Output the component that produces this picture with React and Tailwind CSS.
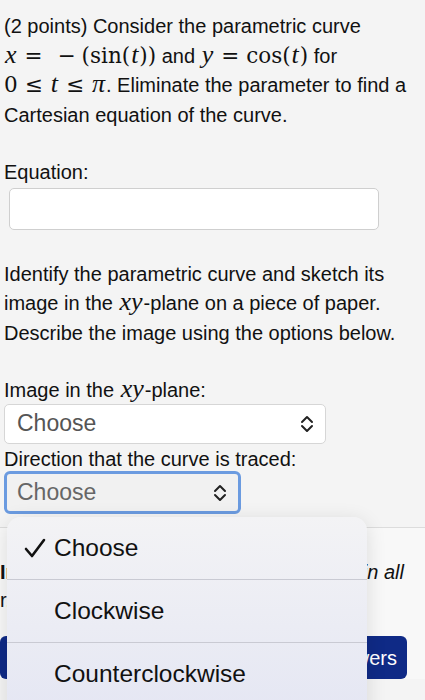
import React from 'react';

const sans = { fontFamily: '"Liberation Sans", Arial, sans-serif' };

function M({ children, rel, bin }) {
  const space = rel ? 'mx-[7px]' : bin ? 'ml-[8px] mr-[6px]' : '';
  return (
    <span className={`inline-block font-['DejaVu_Serif',serif] text-[21.5px] leading-none ${space}`}>
      {children}
    </span>
  );
}

function V({ children }) {
  return (
    <span className="mx-[1px] inline-block font-['Liberation_Serif',serif] text-[26px] italic leading-none">
      {children}
    </span>
  );
}

function Chevrons() {
  return (
    <svg width="14" height="18" viewBox="0 0 14 18" fill="none" stroke="#222" strokeWidth="2" strokeLinecap="round" strokeLinejoin="round">
      <path d="M2 7 L7 2 L12 7" />
      <path d="M2 11 L7 16 L12 11" />
    </svg>
  );
}

function Check() {
  return (
    <svg width="22" height="20" viewBox="0 0 22 20" fill="none" stroke="#111" strokeWidth="2.6" strokeLinecap="round" strokeLinejoin="round">
      <path d="M2 11 L8 18 L20 2" />
    </svg>
  );
}

export default function App() {
  return (
    <div className="relative h-[700px] w-[425px] overflow-hidden bg-[#f4f4f4] text-[#111]" style={sans}>
      <div className="px-1 pt-[12px] text-[20px] leading-[29.5px]">
        <p>
          (2 points) Consider the parametric curve
          <br />
          <V>x</V><M rel>=</M><M bin>−</M><M>(sin(</M><V>t</V><M>))</M> and <V>y</V><M rel>=</M><M>cos(</M><V>t</V><M>)</M> for
          <br />
          <M>0</M><M rel>≤</M><V>t</V><M rel>≤</M><V>π</V>. Eliminate the parameter to find a
          <br />
          Cartesian equation of the curve.
        </p>

        <p className="mt-[28px]">Equation:</p>
        <div className="ml-[5px] h-[42px] w-[370px] rounded-[5px] border border-[#cfcfcf] bg-white" />

        <p className="mt-[30px]">
          Identify the parametric curve and sketch its
          <br />
          image in the <V>xy</V>-plane on a piece of paper.
          <br />
          Describe the image using the options below.
        </p>

        <p className="mt-[28px]">
          Image in the <V>xy</V>-plane:
        </p>
        <div className="mt-[-2px] flex h-[40px] w-[322px] items-center justify-between rounded-[5px] border border-[#d6d6d6] bg-white pl-[12px] pr-[11px]">
          <span className="text-[23px] text-[#555]">Choose</span>
          <Chevrons />
        </div>

        <p className="mt-[1px]">Direction that the curve is traced:</p>
        <div className="mt-[-3px] flex h-[43px] w-[237px] items-center justify-between rounded-[6px] border-[3px] border-[#6b9be0] bg-[#f1f1f1] pl-[10px] pr-[11px]">
          <span className="text-[23px] text-[#666]">Choose</span>
          <Chevrons />
        </div>
      </div>

      <div className="mt-[13px] border-t border-[#dcdcdc] bg-[#f8f8f8] pt-[30px] text-[20px] leading-[28px]">
        <div className="flex justify-between pr-[21px]">
          <b>In</b>
          <i>credit on this problem in all</i>
        </div>
        <p>r.</p>
        <div className="mt-[22px] flex h-[43px] w-[407px] items-center justify-end rounded-[6px] bg-[#0f2a86] pr-[10px] text-white">
          Submit Answers
        </div>
      </div>

      <div className="absolute left-[7px] top-[517px] h-[220px] w-[360px] rounded-[14px] bg-gradient-to-b from-[#f3f3f5] to-[#e3e5f3] text-[24.5px] shadow-[0_4px_20px_rgba(0,0,0,0.12)]">
        <div className="flex h-[62px] items-center">
          <span className="ml-[17px] mr-[8px] flex w-[22px]"><Check /></span>
          <span>Choose</span>
        </div>
        <div className="flex h-[63px] items-center border-t border-[#c9cad3] pl-[47px]">Clockwise</div>
        <div className="flex h-[63px] items-center border-t border-[#c9cad3] pl-[47px]">Counterclockwise</div>
      </div>
    </div>
  );
}
